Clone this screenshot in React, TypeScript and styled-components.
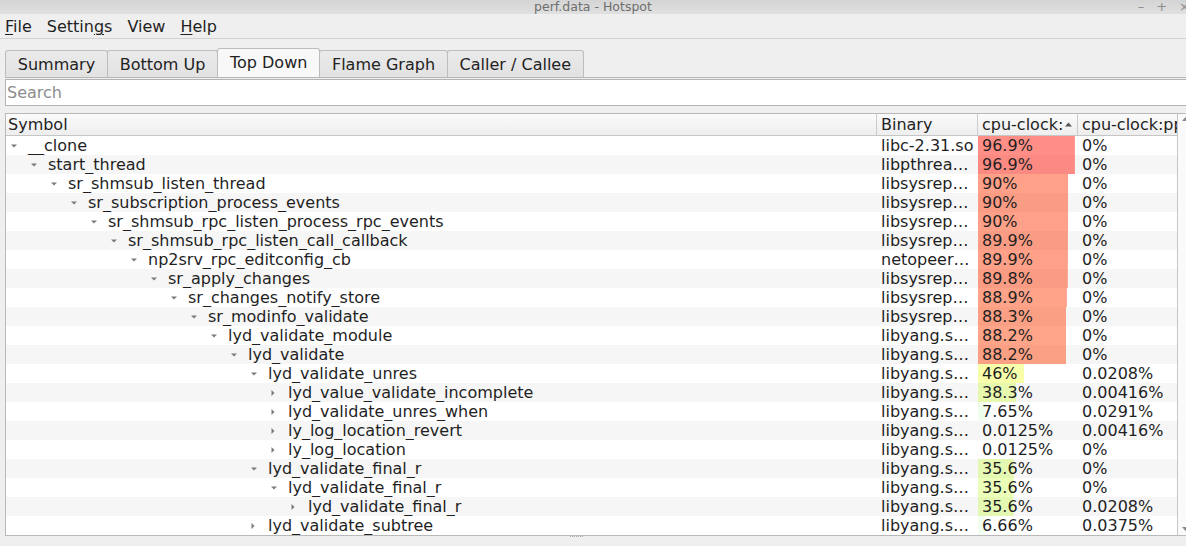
import styled, { createGlobalStyle } from "styled-components";

const GlobalStyle = createGlobalStyle`
  html, body {
    margin: 0;
    padding: 0;
    background: #efefef;
    overflow: hidden;
  }
  body {
    font-family: "DejaVu Sans", "Noto Sans", sans-serif;
    font-size: 16px;
    color: #1f1f1f;
  }
  * { box-sizing: border-box; }
`;

const Window = styled.div`
  width: 1186px;
  height: 546px;
  overflow: hidden;
  display: flex;
  flex-direction: column;
`;

const TitleBar = styled.div`
  height: 14px;
  display: grid;
  grid-template-columns: 1fr auto 1fr;
  align-items: center;
  background: linear-gradient(#d4d4d4, #e0e0e0);
  color: #6e6e6e;
  font-size: 12.5px;
  line-height: 14px;
`;

const Title = styled.span`
  grid-column: 2;
`;

const WindowButtons = styled.div`
  grid-column: 3;
  justify-self: end;
  display: flex;
  gap: 12px;
  margin-right: -4px;
  color: #8e8e8e;
  font-size: 13px;
`;

const MenuBar = styled.div`
  height: 25px;
  display: flex;
  align-items: center;
  gap: 15px;
  padding: 1px 0 0 5px;
  border-bottom: 1px solid #d2d2d2;
`;

const MenuItem = styled.span`
  line-height: 23px;
  u {
    text-decoration-thickness: 1px;
    text-underline-offset: 2px;
  }
`;

const Content = styled.div`
  flex: 1;
  display: flex;
  flex-direction: column;
  padding-left: 5px;
  margin-right: -12px;
`;

const TabBar = styled.div`
  margin-top: 9px;
  height: 29px;
  display: flex;
  align-items: flex-end;
`;

const Tab = styled.div<{ $active?: boolean }>`
  height: ${(p) => (p.$active ? 29 : 27)}px;
  padding: 0 11.8px;
  margin-right: -1px;
  display: flex;
  align-items: center;
  padding-bottom: ${(p) => (p.$active ? 2 : 0)}px;
  border: 1px solid #bdbdbd;
  border-bottom: none;
  border-radius: 3px 3px 0 0;
  background: ${(p) =>
    p.$active ? "#f8f8f8" : "linear-gradient(#eaeaea, #e2e2e2)"};
  color: #222;
  position: relative;
  z-index: ${(p) => (p.$active ? 1 : 0)};
`;

const TabPane = styled.div`
  flex: 1;
  display: flex;
  flex-direction: column;
  border-top: 1px solid #b6b6b6;
  padding-top: 1px;
`;

const SearchBox = styled.input`
  height: 27px;
  border: 1px solid #b4b4b4;
  background: #fff;
  font: inherit;
  padding: 0 1px;
  outline: none;
  &::placeholder {
    color: #8d8d8d;
  }
`;

const Tree = styled.div`
  margin-top: 7px;
  height: 423px;
  display: flex;
  border: 1px solid #b9b9b9;
  background: #fff;
`;

const Viewport = styled.div`
  width: 1171px;
  display: flex;
  flex-direction: column;
  overflow: hidden;
`;

const columns = "871px 101px 100px 99px";

const Header = styled.div`
  height: 22px;
  display: grid;
  grid-template-columns: ${columns};
  border-bottom: 1px solid #c6c6c6;
  background: linear-gradient(#fbfbfb, #eeeeee);
`;

const HeaderCell = styled.div<{ $pad?: number }>`
  display: flex;
  align-items: center;
  justify-content: space-between;
  padding: 0 5px 0 ${(p) => p.$pad ?? 4}px;
  border-right: 1px solid #cbcbcb;
  white-space: nowrap;
  overflow: hidden;
  line-height: 21px;
  &:last-child {
    border-right: none;
    padding-right: 0;
    justify-content: flex-start;
  }
`;

const SortArrow = styled.svg`
  flex: none;
  width: 7px;
  height: 5px;
  fill: #555;
`;

const Body = styled.div`
  display: flex;
  flex-direction: column;
`;

const Row = styled.div`
  height: 19px;
  display: grid;
  grid-template-columns: ${columns};
  line-height: 19px;
  white-space: nowrap;
  &:nth-child(even) {
    background: #f6f6f6;
  }
`;

const SymbolCell = styled.div<{ $level: number }>`
  display: flex;
  align-items: center;
  padding-left: ${(p) => 5 + p.$level * 20}px;
  overflow: hidden;
`;

const Branch = styled.span`
  width: 17px;
  flex: none;
  display: flex;
  align-items: center;
  svg {
    fill: #7a7a7a;
  }
`;

const TextCell = styled.div`
  padding-left: 4px;
  overflow: hidden;
`;

const barColor = (f: number) => {
  const hue = 120 - f * 120;
  const alpha = (120 - (f - 1) * (f - 1) * 120) / 255;
  return `hsla(${hue}, 100%, 50%, ${alpha})`;
};

const CostCell = styled.div<{ $fraction: number }>`
  padding-left: 4px;
  overflow: hidden;
  background-image: linear-gradient(
    ${(p) => barColor(p.$fraction)},
    ${(p) => barColor(p.$fraction)}
  );
  background-repeat: no-repeat;
  background-size: ${(p) => p.$fraction * 100}% 100%;
`;

const ScrollBar = styled.div`
  width: 14px;
  flex: none;
  border-left: 1px solid #c6c6c6;
  background: #fafafa;
  display: flex;
  flex-direction: column;
  justify-content: space-between;
  padding: 3px 0 4px 4px;
  svg {
    fill: #8a8a8a;
  }
`;

const Grip = styled.div`
  height: 10px;
  padding-left: 565px;
  &::before {
    content: "";
    display: block;
    width: 13px;
    border-top: 1px dotted #a8a8a8;
  }
`;

type Node = {
  name: string;
  level: number;
  open?: boolean;
  binary: string;
  cost: string;
  pp: string;
};

const rows: Node[] = [
  { name: "__clone", level: 0, open: true, binary: "libc-2.31.so", cost: "96.9", pp: "0" },
  { name: "start_thread", level: 1, open: true, binary: "libpthrea…", cost: "96.9", pp: "0" },
  { name: "sr_shmsub_listen_thread", level: 2, open: true, binary: "libsysrep…", cost: "90", pp: "0" },
  { name: "sr_subscription_process_events", level: 3, open: true, binary: "libsysrep…", cost: "90", pp: "0" },
  { name: "sr_shmsub_rpc_listen_process_rpc_events", level: 4, open: true, binary: "libsysrep…", cost: "90", pp: "0" },
  { name: "sr_shmsub_rpc_listen_call_callback", level: 5, open: true, binary: "libsysrep…", cost: "89.9", pp: "0" },
  { name: "np2srv_rpc_editconfig_cb", level: 6, open: true, binary: "netopeer…", cost: "89.9", pp: "0" },
  { name: "sr_apply_changes", level: 7, open: true, binary: "libsysrep…", cost: "89.8", pp: "0" },
  { name: "sr_changes_notify_store", level: 8, open: true, binary: "libsysrep…", cost: "88.9", pp: "0" },
  { name: "sr_modinfo_validate", level: 9, open: true, binary: "libsysrep…", cost: "88.3", pp: "0" },
  { name: "lyd_validate_module", level: 10, open: true, binary: "libyang.s…", cost: "88.2", pp: "0" },
  { name: "lyd_validate", level: 11, open: true, binary: "libyang.s…", cost: "88.2", pp: "0" },
  { name: "lyd_validate_unres", level: 12, open: true, binary: "libyang.s…", cost: "46", pp: "0.0208" },
  { name: "lyd_value_validate_incomplete", level: 13, binary: "libyang.s…", cost: "38.3", pp: "0.00416" },
  { name: "lyd_validate_unres_when", level: 13, binary: "libyang.s…", cost: "7.65", pp: "0.0291" },
  { name: "ly_log_location_revert", level: 13, binary: "libyang.s…", cost: "0.0125", pp: "0.00416" },
  { name: "ly_log_location", level: 13, binary: "libyang.s…", cost: "0.0125", pp: "0" },
  { name: "lyd_validate_final_r", level: 12, open: true, binary: "libyang.s…", cost: "35.6", pp: "0" },
  { name: "lyd_validate_final_r", level: 13, open: true, binary: "libyang.s…", cost: "35.6", pp: "0" },
  { name: "lyd_validate_final_r", level: 14, binary: "libyang.s…", cost: "35.6", pp: "0.0208" },
  { name: "lyd_validate_subtree", level: 12, binary: "libyang.s…", cost: "6.66", pp: "0.0375" },
];

const Triangle = ({ open }: { open?: boolean }) =>
  open ? (
    <svg width="6" height="4" viewBox="0 0 6 4">
      <path d="M0 0.5 H6 L3 3.5 Z" />
    </svg>
  ) : (
    <svg width="4" height="6" viewBox="0 0 4 6">
      <path d="M0.5 0 V6 L3.5 3 Z" />
    </svg>
  );

export default function App() {
  return (
    <>
      <GlobalStyle />
      <Window>
        <TitleBar>
          <Title>perf.data - Hotspot</Title>
          <WindowButtons>
            <span>–</span>
            <span>+</span>
            <span>×</span>
          </WindowButtons>
        </TitleBar>
        <MenuBar>
          <MenuItem>
            <u>F</u>ile
          </MenuItem>
          <MenuItem>
            Settin<u>g</u>s
          </MenuItem>
          <MenuItem>View</MenuItem>
          <MenuItem>
            <u>H</u>elp
          </MenuItem>
        </MenuBar>
        <Content>
          <TabBar>
            <Tab>Summary</Tab>
            <Tab>Bottom Up</Tab>
            <Tab $active>Top Down</Tab>
            <Tab>Flame Graph</Tab>
            <Tab>Caller / Callee</Tab>
          </TabBar>
          <TabPane>
            <SearchBox placeholder="Search" readOnly />
            <Tree>
              <Viewport>
                <Header>
                  <HeaderCell $pad={2}>Symbol</HeaderCell>
                  <HeaderCell>Binary</HeaderCell>
                  <HeaderCell>
                    cpu-clock:
                    <SortArrow viewBox="0 0 7 5">
                      <path d="M0 4.5 L3.5 0.5 L7 4.5 Z" />
                    </SortArrow>
                  </HeaderCell>
                  <HeaderCell>cpu-clock:pp</HeaderCell>
                </Header>
                <Body>
                  {rows.map((r, i) => (
                    <Row key={i}>
                      <SymbolCell $level={r.level}>
                        <Branch>
                          <Triangle open={r.open} />
                        </Branch>
                        {r.name}
                      </SymbolCell>
                      <TextCell>{r.binary}</TextCell>
                      <CostCell $fraction={parseFloat(r.cost) / 100}>
                        {r.cost}%
                      </CostCell>
                      <TextCell>{r.pp}%</TextCell>
                    </Row>
                  ))}
                </Body>
              </Viewport>
              <ScrollBar>
                <svg width="7" height="4" viewBox="0 0 7 4">
                  <path d="M0 4 L3.5 0 L7 4 Z" />
                </svg>
                <svg width="7" height="4" viewBox="0 0 7 4">
                  <path d="M0 0 H7 L3.5 4 Z" />
                </svg>
              </ScrollBar>
            </Tree>
            <Grip />
          </TabPane>
        </Content>
      </Window>
    </>
  );
}
